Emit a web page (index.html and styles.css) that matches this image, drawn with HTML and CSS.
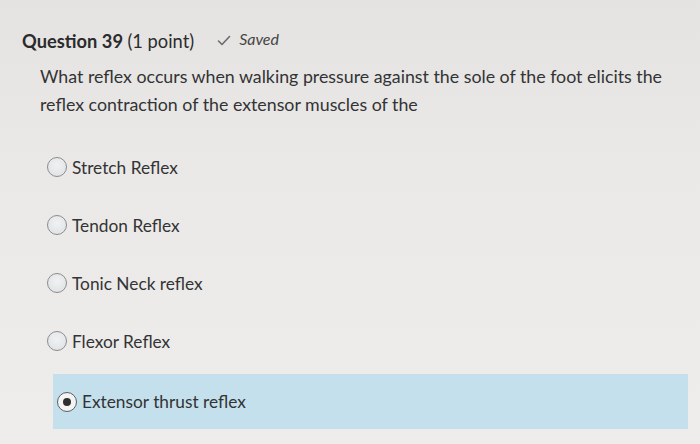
FILE: index.html
```html
<!DOCTYPE html>
<html>
<head>
  <meta charset="utf-8">
  <title>Question 39</title>
  <link rel="stylesheet" href="styles.css">
</head>
<body>
<div class="question">
  <div class="qhead">
    <span class="qtitle">Question 39 <span class="points">(1 point)</span></span>
    <span class="saved">
      <svg width="14" height="11" viewBox="0 0 14 11"><path d="M1.5 6 L5 9.5 L12.5 1.5" fill="none" stroke="#6b6b6b" stroke-width="1.6" stroke-linecap="round" stroke-linejoin="round"/></svg>
      <em>Saved</em>
    </span>
  </div>
  <p class="qtext">What reflex occurs when walking pressure against the sole of the foot elicits the reflex contraction of the extensor muscles of the</p>

  <ul class="options">
    <li class="option"><span class="radio"></span>Stretch Reflex</li>
    <li class="option"><span class="radio"></span>Tendon Reflex</li>
    <li class="option"><span class="radio"></span>Tonic Neck reflex</li>
    <li class="option"><span class="radio"></span>Flexor Reflex</li>
    <li class="option selected"><span class="radio"></span>Extensor thrust reflex</li>
  </ul>
</div>
</body>
</html>
```

FILE: styles.css
```css
html, body {
  margin: 0;
  padding: 0;
  height: 100%;
}
body {
  background: linear-gradient(180deg, #e4e3e1 0%, #eae9e7 40%, #eeedeb 100%);
  color: #333335;
  font-family: Lato, "Open Sans", sans-serif;
}
.question { padding: 29px 12px 0 22px; }

.qhead { display: flex; align-items: center; gap: 23px; height: 24px; }
.qtitle { font-size: 18.3px; font-weight: 700; color: #2b2b2d; }
.qtitle .points { font-weight: 400; }
.saved { display: flex; align-items: center; gap: 8px; font-size: 16px; color: #444; margin-top: -6px; }
.saved svg { margin-top: 4px; }

.qtext {
  margin: 9px 0 0 18px;
  font-size: 17.8px;
  line-height: 28px;
  color: #333335;
  width: 660px;
}

.options { list-style: none; margin: 20px 0 0 25px; padding: 0; }
.option {
  display: flex;
  align-items: center;
  gap: 5px;
  height: 58px;
  font-size: 17.3px;
  color: #333335;
}
.option .radio {
  width: 18px;
  height: 18px;
  border-radius: 50%;
  border: 1.5px solid #8c8c8c;
  background: radial-gradient(circle at 50% 40%, #f0f1f2, #dde1e4);
  display: flex;
  align-items: center;
  justify-content: center;
}
.option.selected {
  background: #c4e0ec;
  height: 55px;
  margin: 4px 0 0 6px;
  padding-left: 4px;
  width: 631px;
}
.option.selected .radio {
  border-color: #5d5d5d;
  background: #f4f4f4;
}
.option.selected .radio::after {
  content: "";
  width: 8px;
  height: 8px;
  border-radius: 50%;
  background: #2f2f2f;
}
```
